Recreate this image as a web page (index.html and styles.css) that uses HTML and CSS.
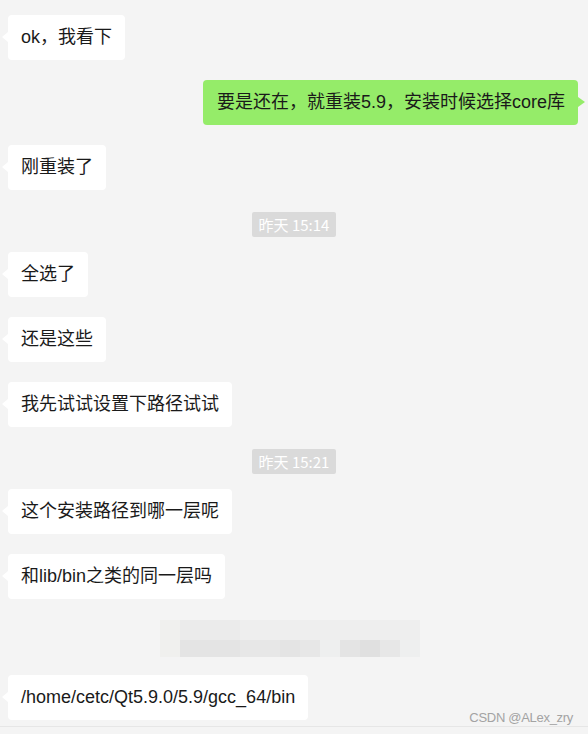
FILE: index.html
```html
<!DOCTYPE html>
<html lang="zh-CN">
<head>
  <meta charset="UTF-8" />
  <meta name="viewport" content="width=device-width, initial-scale=1.0" />
  <title>聊天记录</title>
  <link rel="stylesheet" href="styles.css">
</head>
<body>
  <div class="chat">
    <div class="row"><div class="bubble">ok，我看下</div></div>
    <div class="row mine"><div class="bubble green">要是还在，就重装5.9，安装时候选择core库</div></div>
    <div class="row"><div class="bubble">刚重装了</div></div>
    <div class="time"><span>昨天 15:14</span></div>
    <div class="row"><div class="bubble">全选了</div></div>
    <div class="row"><div class="bubble">还是这些</div></div>
    <div class="row"><div class="bubble">我先试试设置下路径试试</div></div>
    <div class="time"><span>昨天 15:21</span></div>
    <div class="row"><div class="bubble">这个安装路径到哪一层呢</div></div>
    <div class="row"><div class="bubble">和lib/bin之类的同一层吗</div></div>
    <div class="mosaic">
      <span class="a"></span><span class="b"></span><span class="b"></span><span class="b"></span><span class="c"></span><span class="c"></span><span class="c"></span><span class="c"></span><span class="c"></span><span class="c"></span><span class="c"></span><span class="c"></span><span class="c"></span>
      <span class="a"></span><span class="d"></span><span class="d"></span><span class="d"></span><span class="e"></span><span class="e"></span><span class="d"></span><span class="e"></span><span class="f"></span><span class="d"></span><span class="g"></span><span class="e"></span><span class="f"></span>
    </div>
    <div class="row"><div class="bubble">/home/cetc/Qt5.9.0/5.9/gcc_64/bin</div></div>
    <div class="mark">CSDN @ALex_zry</div>
  </div>
</body>
</html>
```
FILE: styles.css
```css
body {
  margin: 0;
  background: #f4f4f4;
  font-family: "Liberation Sans", "Noto Sans CJK SC", sans-serif;
  color: #1a1a1a;
}
.chat {
  position: relative;
  height: 727px;
  box-sizing: border-box;
  padding: 15px 0 0;
  border-bottom: 1px solid #e6e6e6;
  display: flex;
  flex-direction: column;
  gap: 20px;
}
.row {
  display: flex;
  padding: 0 8px;
}
.row.mine {
  justify-content: flex-end;
  padding-right: 10px;
}
.bubble {
  position: relative;
  background: #fff;
  border-radius: 4px;
  padding: 10px 13px;
  font-size: 18px;
  line-height: 25px;
  white-space: nowrap;
}
.bubble::before {
  content: "";
  position: absolute;
  left: -6px;
  top: 17px;
  border: 5px solid transparent;
  border-left: 0;
  border-right: 6px solid #fff;
}
.bubble.green {
  background: #95ec69;
  padding-left: 14px;
}
.bubble.green::before {
  left: auto;
  right: -7px;
  border-right: 0;
  border-left: 7px solid #95ec69;
  border-width: 5px 0 5px 7px;
}
.time {
  display: flex;
  justify-content: center;
  margin: 2px 0 -5px;
}
.time span {
  background: #dadada;
  color: #fff;
  font-family: "Noto Sans CJK SC", sans-serif;
  font-size: 15px;
  line-height: 25px;
  padding: 0 7px;
  border-radius: 2px;
}
.mosaic {
  display: grid;
  grid-template-columns: repeat(13, 20px);
  grid-template-rows: 20px 17px;
  margin: 1px 0 -2px 160px;
}
.mosaic .a { background: #f0f0ee; }
.mosaic .b { background: #ebebeb; }
.mosaic .c { background: #eeeeee; }
.mosaic .d { background: #e4e4e4; }
.mosaic .e { background: #e7e7e7; }
.mosaic .f { background: #eeefef; }
.mosaic .g { background: #e0e0e0; }
.mark {
  position: absolute;
  right: 15px;
  bottom: 1px;
  font-family: "Liberation Sans", sans-serif;
  font-size: 13px;
  letter-spacing: -0.3px;
  color: #a3a3a3;
}
```
